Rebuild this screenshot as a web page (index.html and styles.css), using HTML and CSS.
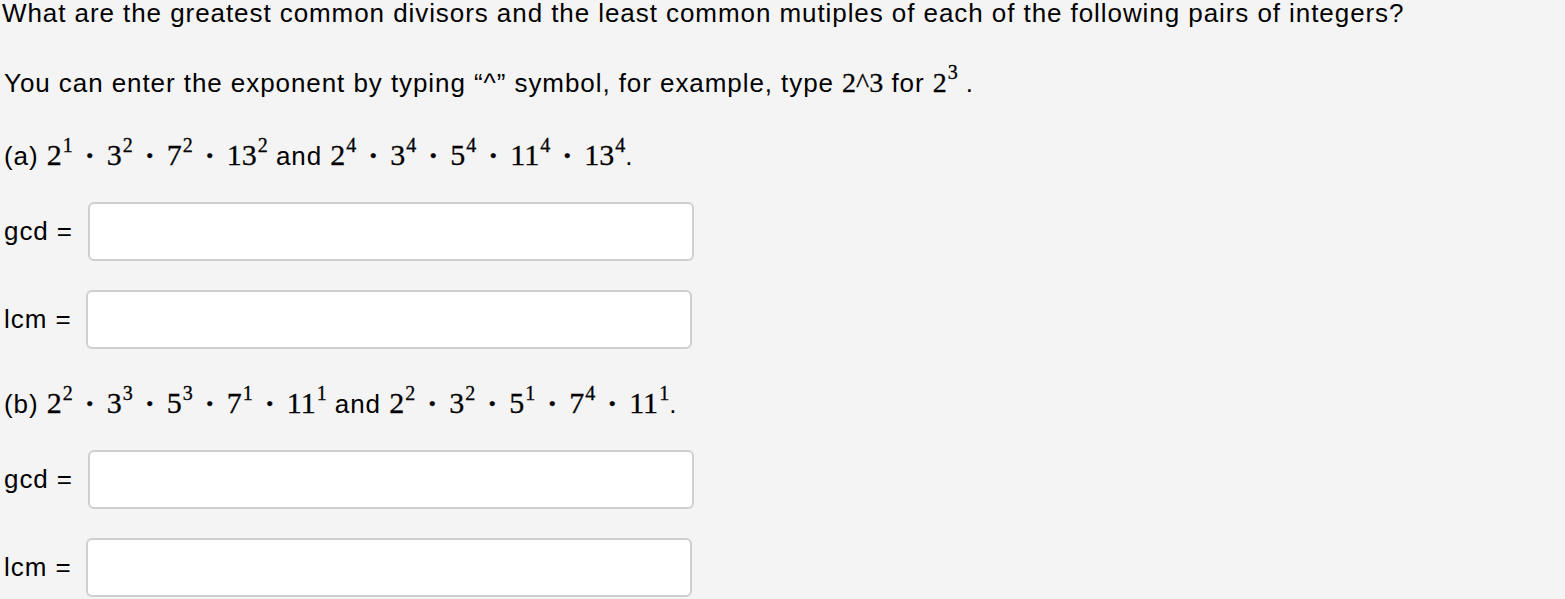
FILE: index.html
```html
<!DOCTYPE html>
<html>
<head>
<meta charset="utf-8">
<link rel="stylesheet" href="styles.css">
</head>
<body>
<div class="page">
  <p class="line intro">What are the greatest common divisors and the least common mutiples of each of the following pairs of integers?</p>
  <p class="line hint">You can enter the exponent by typing “^” symbol, for example, type <span class="m">2^3</span> for <span class="m">2<sup>3</sup></span> .</p>
  <p class="line part">(a) <span class="m">2<sup>1</sup><span class="op">·</span>3<sup>2</sup><span class="op">·</span>7<sup>2</sup><span class="op">·</span>13<sup>2</sup></span> and <span class="m">2<sup>4</sup><span class="op">·</span>3<sup>4</sup><span class="op">·</span>5<sup>4</sup><span class="op">·</span>11<sup>4</sup><span class="op">·</span>13<sup>4</sup></span>.</p>
  <div class="field first"><label class="lbl">gcd =</label><input class="box" type="text"></div>
  <div class="field second"><label class="lbl">lcm =</label><input class="box" type="text"></div>
  <p class="line part partb">(b) <span class="m">2<sup>2</sup><span class="op">·</span>3<sup>3</sup><span class="op">·</span>5<sup>3</sup><span class="op">·</span>7<sup>1</sup><span class="op">·</span>11<sup>1</sup></span> and <span class="m">2<sup>2</sup><span class="op">·</span>3<sup>2</sup><span class="op">·</span>5<sup>1</sup><span class="op">·</span>7<sup>4</sup><span class="op">·</span>11<sup>1</sup></span>.</p>
  <div class="field first"><label class="lbl">gcd =</label><input class="box" type="text"></div>
  <div class="field second"><label class="lbl">lcm =</label><input class="box" type="text"></div>
</div>
</body>
</html>
```
FILE: styles.css
```css
html, body {
  margin: 0;
  padding: 0;
  background: #f4f4f4;
}
.page {
  padding-left: 4px;
  font-family: "Liberation Sans", Arial, sans-serif;
  font-size: 26px;
  letter-spacing: 0.93px;
  color: #000;
  display: flex;
  flex-direction: column;
}
.line {
  margin: 0;
  height: 28px;
  line-height: 28px;
  white-space: nowrap;
}
.intro, .hint {
  height: 26px;
  line-height: 26px;
}
.intro { margin-left: -2px; }
.hint { margin-top: 44px; }
.part { margin-top: 45px; }
.partb { margin-top: 40px; }
.m {
  font-family: "Liberation Serif", "Times New Roman", serif;
  font-size: 30px;
  letter-spacing: 0;
  -webkit-text-stroke: 0.3px #000;
}
.hint .m { font-size: 28px; }
.m sup {
  font-size: 20px;
  line-height: 0;
  vertical-align: 0;
  position: relative;
  top: -13px;
  margin-left: 1px;
}
.op {
  display: inline-block;
  margin: 0 12px;
  font-weight: bold;
}
.field {
  display: flex;
  align-items: center;
  height: 59px;
}
.field.first { margin-top: 33px; }
.field.second { margin-top: 29px; }
.lbl {
  width: 84px;
  flex: none;
}
.field.second .lbl { width: 82px; }
.box {
  box-sizing: border-box;
  width: 606px;
  height: 59px;
  border: 2px solid #cfcfcf;
  border-radius: 6px;
  background: #fff;
  margin: 0;
  padding: 0 10px;
  font-size: 24px;
  outline: none;
}
```
